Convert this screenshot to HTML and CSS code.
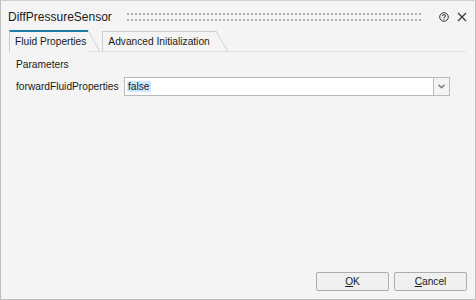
FILE: index.html
```html
<!DOCTYPE html>
<html lang="en">
<head>
    <meta charset="UTF-8">
    <title>DiffPressureSensor</title>
    <link rel="stylesheet" href="styles.css">
</head>
<body>
    <div class="dialog">
        <div class="titlebar">
            <span class="title">DiffPressureSensor</span>
            <div class="grip"></div>
            <svg class="icon" width="10" height="10" viewBox="0 0 10 10">
                <circle cx="5" cy="5" r="4.3" fill="none" stroke="#333" stroke-width="1"/>
                <path d="M3.4 4 Q3.4 2.6 5 2.6 Q6.6 2.6 6.6 3.9 Q6.6 4.8 5 5.3 L5 6.2" fill="none" stroke="#333" stroke-width="1"/>
                <rect x="4.5" y="6.9" width="1" height="1" fill="#333"/>
            </svg>
            <svg class="icon" width="10" height="10" viewBox="0 0 10 10">
                <path d="M1 1 L9 9 M9 1 L1 9" stroke="#333" stroke-width="1.1"/>
            </svg>
        </div>

        <div class="tabs">
            <div class="tab active">Fluid Properties</div>
            <div class="tab">Advanced Initialization</div>
        </div>

        <div class="panel">
            <div class="group-label">Parameters</div>
            <div class="row">
                <label class="field-label">forwardFluidProperties</label>
                <div class="combo">
                    <div class="combo-value"><span class="selected">false</span></div>
                    <div class="combo-drop">
                        <svg width="7" height="5" viewBox="0 0 7 5">
                            <path d="M0.5 0.8 L3.5 3.8 L6.5 0.8" fill="none" stroke="#777" stroke-width="1.4"/>
                        </svg>
                    </div>
                </div>
            </div>
        </div>

        <div class="footer">
            <button class="btn"><u>O</u>K</button>
            <button class="btn"><u>C</u>ancel</button>
        </div>
    </div>
</body>
</html>
```

FILE: styles.css
```css
* {
    margin: 0;
    padding: 0;
    box-sizing: border-box;
}

body {
    background-color: #f4f4f4;
    font-family: 'Liberation Sans', Arial, sans-serif;
    color: #1a1a1a;
}

.dialog {
    width: 476px;
    height: 300px;
    border: 1px solid #bdbdbd;
    border-top-color: #cfcfcf;
    background-color: #f4f4f4;
    display: flex;
    flex-direction: column;
}

/* title bar */
.titlebar {
    height: 28px;
    display: flex;
    align-items: center;
    padding: 4px 8px 0 7px;
}

.title {
    font-size: 12px;
    color: #1a1a1a;
}

.grip {
    flex: 1;
    height: 8px;
    margin: 0 8px 0 15px;
    background: conic-gradient(at 2px 2px, transparent 75%, #b0b0b0 0) 0 0 / 4px 6px;
}

.icon {
    margin-left: 8px;
    flex-shrink: 0;
}

/* tabs */
.tabs {
    display: flex;
    align-items: flex-end;
    height: 23px;
    margin: 0 9px 0 8px;
    border-bottom: 1px solid #e2e2e2;
}

.tab {
    position: relative;
    height: 20px;
    padding: 4px 6px 0 5px;
    margin-right: 14px;
    font-size: 10.2px;
    color: #1a1a1a;
    border-top: 1px solid #cdcdcd;
    border-left: 1px solid #cdcdcd;
    background-color: #f4f4f4;
}

.tab::after {
    content: "";
    position: absolute;
    top: -1px;
    right: -12px;
    width: 12px;
    height: 21px;
    background: linear-gradient(to top right, transparent calc(50% - 0.6px), #c4c4c4 50%, transparent calc(50% + 0.6px));
}

.tab.active {
    height: 22px;
    margin-right: 3px;
    margin-bottom: -1px;
    padding: 4px 2px 0 5px;
    border-top: 2px solid #1f7ca8;
    z-index: 1;
}

.tab.active::after {
    top: -2px;
    height: 22px;
}

.tab + .tab {
    margin-left: 11px;
}

/* panel */
.panel {
    flex: 1;
    padding: 6px 25px 0 15px;
    font-size: 10.2px;
}

.group-label {
    height: 14px;
    line-height: 14px;
}

.row {
    display: flex;
    align-items: center;
    margin-top: 5px;
}

.field-label {
    width: 108px;
    flex-shrink: 0;
}

.combo {
    flex: 1;
    display: flex;
    height: 19px;
}

.combo-value {
    flex: 1;
    background-color: #ffffff;
    border: 1px solid #b9b9b9;
    padding: 1px 2px;
    line-height: 15px;
}

.selected {
    background-color: #cce8ff;
    padding: 0 1px;
}

.combo-drop {
    width: 16px;
    border: 1px solid #b9b9b9;
    border-left: none;
    background-color: #f4f4f4;
    display: flex;
    align-items: center;
    justify-content: center;
}

/* footer */
.footer {
    display: flex;
    justify-content: flex-end;
    gap: 5px;
    padding: 0 8px 8px 0;
}

.btn {
    width: 73px;
    height: 19px;
    font-family: 'Liberation Sans', Arial, sans-serif;
    font-size: 10.2px;
    color: #1a1a1a;
    background-color: #f0f0f0;
    border: 1px solid #adadad;
    border-radius: 2px;
}
```
